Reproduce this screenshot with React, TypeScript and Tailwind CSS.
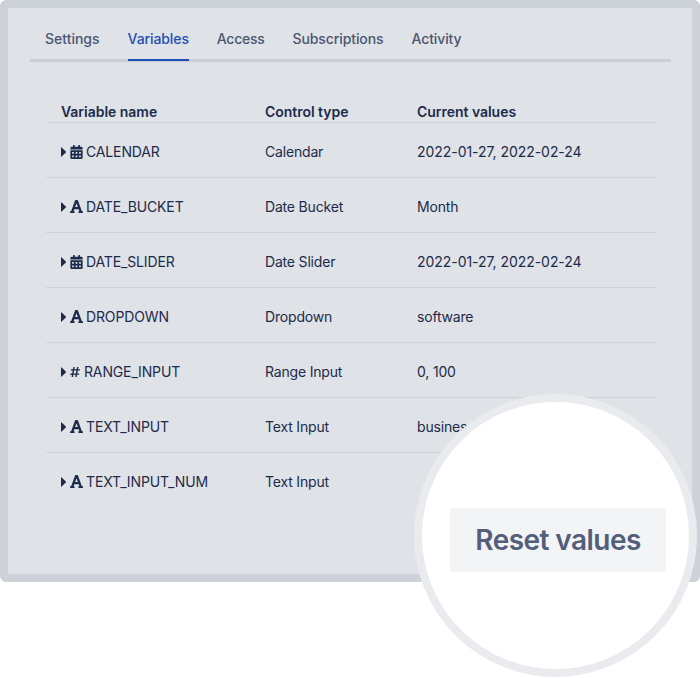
import { FaCalendarAlt, FaFont, FaHashtag } from "react-icons/fa";

type Kind = "cal" | "font" | "hash";
const rows: { kind: Kind; name: string; type: string; value: string; date?: boolean }[] = [
  { kind: "cal", name: "CALENDAR", type: "Calendar", value: "2022-01-27, 2022-02-24", date: true },
  { kind: "font", name: "DATE_BUCKET", type: "Date Bucket", value: "Month" },
  { kind: "cal", name: "DATE_SLIDER", type: "Date Slider", value: "2022-01-27, 2022-02-24", date: true },
  { kind: "font", name: "DROPDOWN", type: "Dropdown", value: "software" },
  { kind: "hash", name: "RANGE_INPUT", type: "Range Input", value: "0, 100" },
  { kind: "font", name: "TEXT_INPUT", type: "Text Input", value: "business" },
  { kind: "font", name: "TEXT_INPUT_NUM", type: "Text Input", value: "" },
];

function KindIcon({ kind }: { kind: Kind }) {
  if (kind === "cal") return <FaCalendarAlt className="w-[13px] h-[14px] mr-[3px]" />;
  if (kind === "font") return <FaFont className="w-[13px] h-[15px] mr-[3px]" />;
  return <FaHashtag className="w-[10px] h-[12px] mr-[4px]" />;
}

const tabs: { label: string; cls: string }[] = [
  { label: "Settings", cls: "tracking-[0px] text-[#4a5673]" },
  { label: "Variables", cls: "tracking-[-0.1px] text-[#1e4fb5] h-[53px] border-b-2 border-[#1e4fb5]" },
  { label: "Access", cls: "tracking-[-0.27px] text-[#4a5673]" },
  { label: "Subscriptions", cls: "tracking-[-0.1px] text-[#4a5673]" },
  { label: "Activity", cls: "tracking-[-0.1px] text-[#4a5673]" },
];

export default function App() {
  return (
    <div className="relative w-[700px] h-[678px] bg-white overflow-hidden font-['Inter',sans-serif] text-[14px] text-[#1c2b4b]">
      <div className="h-[582px] border-[8px] border-[#cdd2d9] rounded-[6px] bg-[#dfe2e7] pl-[22px] pr-[21px]">
        <div className="flex gap-[28px] pl-[15px] h-[54px] border-b-[3px] border-[#c9cdd4]">
          {tabs.map((t) => (
            <div key={t.label} className={"pt-[22px] font-medium leading-[18px] " + t.cls}>
              {t.label}
            </div>
          ))}
        </div>
        <div className="ml-[16px] mr-[15px] mt-[39px]">
          <div className="flex h-[23px] border-b border-[#cfd3d9] font-semibold text-[#1c2b4b] leading-[24px] -mt-[1px] pl-[15px] tracking-[-0.03px]">
            <div className="w-[204px]">Variable name</div>
            <div className="w-[152px]">Control type</div>
            <div>Current values</div>
          </div>
          {rows.map((r, i) => (
            <div
              key={r.name}
              className={
                i < rows.length - 1
                  ? "flex items-center h-[55px] pl-[15px] pt-[3px] border-b border-[#cfd3d9]"
                  : "flex items-center h-[55px] pl-[15px] pt-[3px] pb-[1px]"
              }
            >
              <div className="w-[204px] flex items-center">
                <svg viewBox="0 0 5 10" className="w-[5px] h-[10px] mr-[4px] fill-current">
                  <path d="M0.4 0.3 L4.8 4.5 Q5.2 5 4.8 5.5 L0.4 9.7 Q0 10 0 9.4 V0.6 Q0 0 0.4 0.3 Z" />
                </svg>
                <KindIcon kind={r.kind} />
                <span className="tracking-[-0.14px]">{r.name}</span>
              </div>
              <div className="w-[152px] tracking-[-0.18px]">{r.type}</div>
              <div className={r.date ? "tracking-[-0.05px]" : "tracking-[-0.18px]"}>{r.value}</div>
            </div>
          ))}
        </div>
      </div>
      <div className="absolute left-[414px] top-[394px] w-[283px] h-[283px] rounded-full bg-white border-[8px] border-[#e9ebef] flex items-center justify-center">
        <div className="w-[216px] h-[64px] mt-[9px] ml-[5px] rounded-[4px] bg-[#f3f4f6] flex items-center justify-center text-[28px] font-semibold text-[#525e7a] tracking-[-0.55px]">
          Reset values
        </div>
      </div>
    </div>
  );
}
